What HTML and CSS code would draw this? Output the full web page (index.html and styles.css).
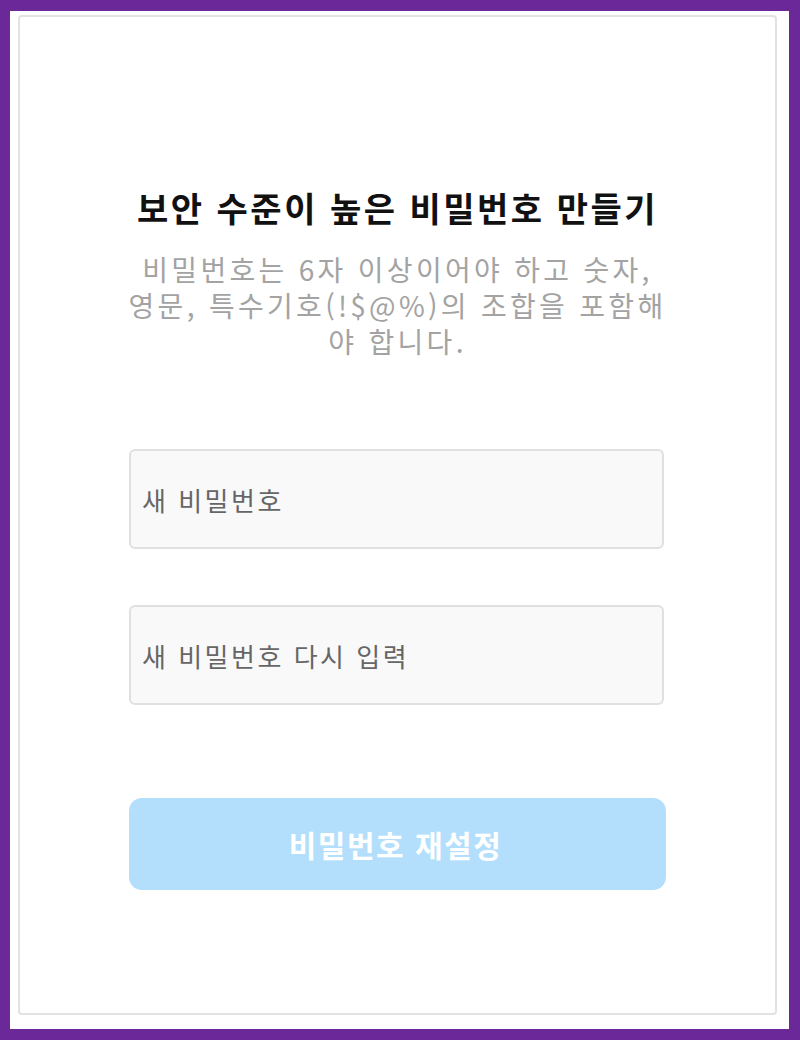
FILE: index.html
```html
<!DOCTYPE html>
<html lang="ko">
<head>
<meta charset="utf-8">
<title>비밀번호 재설정</title>
<link rel="stylesheet" href="styles.css">
</head>
<body>
  <div class="frame">
    <div class="card">
      <div class="reset-box">
        <h1 class="title">보안 수준이 높은 비밀번호 만들기</h1>
        <p class="desc">비밀번호는 6자 이상이어야 하고 숫자, 영문, 특수기호(!$@%)의 조합을 포함해야 합니다.</p>
        <form class="reset-form">
          <input type="password" class="field" placeholder="새 비밀번호">
          <input type="password" class="field" placeholder="새 비밀번호 다시 입력">
          <button type="button" class="submit-button">비밀번호 재설정</button>
        </form>
      </div>
    </div>
  </div>
</body>
</html>
```

FILE: styles.css
```css
html, body {margin: 0; padding: 0;}
body {background: #6b2898; font-family: "Noto Sans CJK KR", "Noto Sans", sans-serif; height: 1040px; box-sizing: border-box; padding: 11px 11px 11px 10px;}
.frame {background: #fff; height: 100%; box-sizing: border-box; padding: 4px 12px 14px 8px;}
.card {height: 100%; box-sizing: border-box; border: 2px solid #e2e2e2; border-radius: 4px; display: flex; justify-content: center;}
.reset-box {width: 537px; padding-top: 164px; text-align: center;}
.title {margin: 0; font-size: 34px; font-weight: bold; color: #111; line-height: 54px; letter-spacing: 2.5px;}
.desc {margin: 16px -4px 0; font-size: 28px; line-height: 36px; color: #a3a3a3; letter-spacing: 3.3px;}
.reset-form {display: flex; flex-direction: column; margin-top: 90px;}
.field {height: 100px; box-sizing: border-box; margin: 0 2px 56px 0; padding: 0 11px; border: 2px solid #e0e0e0; border-radius: 6px; background: #f9f9f9; font-family: inherit; font-size: 26px; letter-spacing: 2.5px; color: #555;}
.field::placeholder {color: #666;}
.reset-form .field:nth-child(2) {margin-bottom: 93px;}
.submit-button {height: 92px; border: none; border-radius: 13px; background: #b3dffc; color: #fff; font-family: inherit; font-size: 30px; font-weight: bold; letter-spacing: 1.5px; padding-left: 2px;}
```
